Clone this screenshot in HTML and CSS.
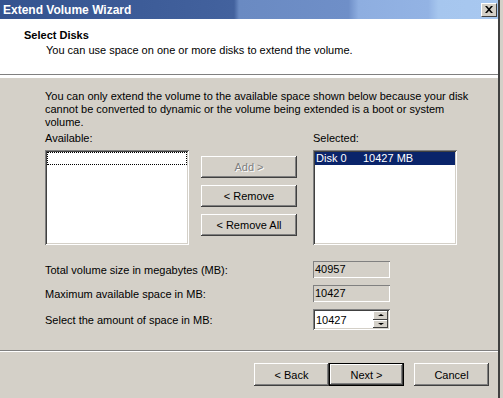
FILE: index.html
```html
<!DOCTYPE html>
<html>
<head>
    <title>Extend Volume Wizard</title>
    <link rel="stylesheet" href="styles.css">
</head>
<body>
    <div class="window">
        <div class="titlebar">
            <span class="title">Extend Volume Wizard</span>
            <div class="close-btn">
                <svg width="8" height="7" viewBox="0 0 8 7">
                    <path d="M0 0h2l2 2.2L6 0h2L5 3.5 8 7H6L4 4.8 2 7H0l3-3.5z" fill="#000"/>
                </svg>
            </div>
        </div>

        <div class="header">
            <h1>Select Disks</h1>
            <p>You can use space on one or more disks to extend the volume.</p>
        </div>

        <div class="content">
            <p class="note">
                You can only extend the volume to the available space shown below because your disk<br>
                cannot be converted to dynamic or the volume being extended is a boot or system<br>
                volume.
            </p>

            <div class="picker">
                <div class="column">
                    <label>Available:</label>
                    <div class="listbox">
                        <div class="item focused"></div>
                    </div>
                </div>
                <div class="moves">
                    <button class="btn" disabled>Add &gt;</button>
                    <button class="btn">&lt; Remove</button>
                    <button class="btn">&lt; Remove All</button>
                </div>
                <div class="column">
                    <label>Selected:</label>
                    <div class="listbox">
                        <div class="item selected">
                            <span class="disk">Disk 0</span>
                            <span>10427 MB</span>
                        </div>
                    </div>
                </div>
            </div>

            <div class="fields">
                <div class="field-row">
                    <span class="field-label">Total volume size in megabytes (MB):</span>
                    <span class="readonly">40957</span>
                </div>
                <div class="field-row">
                    <span class="field-label">Maximum available space in MB:</span>
                    <span class="readonly">10427</span>
                </div>
                <div class="field-row">
                    <span class="field-label">Select the amount of space in MB:</span>
                    <div class="spinbox">
                        <span class="spin-value">10427</span>
                        <div class="spin-buttons">
                            <span class="spin up"></span>
                            <span class="spin down"></span>
                        </div>
                    </div>
                </div>
            </div>
        </div>

        <div class="footer">
            <button class="btn wide">&lt; Back</button>
            <button class="btn wide default">Next &gt;</button>
            <button class="btn wide cancel">Cancel</button>
        </div>
    </div>
</body>
</html>
```

FILE: styles.css
```css
* {
    box-sizing: border-box;
    font-family: "Liberation Sans", Arial, sans-serif;
}
body {
    margin: 0;
    width: 503px;
    height: 398px;
    overflow: hidden;
    background-color: #d4d0c8;
    font-size: 11px;
    color: #000;
}
.window {
    width: 500px;
    height: 398px;
    display: flex;
    flex-direction: column;
    background-color: #d4d0c8;
    border-right: 2px solid #404040;
}

/* title bar */
.titlebar {
    height: 19px;
    flex-shrink: 0;
    display: flex;
    align-items: center;
    padding: 0 1px 0 3px;
    background: linear-gradient(to right, #34538f 0%, #43629e 47%, #6a8ac2 48%, #6f8fc8 70%, #8eaee0 72%, #93b3e4 86%, #a6c6ee 88%, #a8c8f0 100%);
}
.title {
    color: #fff;
    font-weight: bold;
    font-size: 12px;
}
.close-btn {
    position: relative;
    z-index: 2;
    width: 16px;
    height: 14px;
    margin-left: auto;
    flex-shrink: 0;
    display: flex;
    align-items: center;
    justify-content: center;
    background-color: #d4d0c8;
    border-style: solid;
    border-width: 1px;
    border-color: #fff #404040 #404040 #fff;
}

/* header */
.header {
    height: 59px;
    flex-shrink: 0;
    background-color: #fff;
    padding: 10px 0 0 24px;
    border-bottom: 1px solid #fff;
    box-shadow: inset 0 -2px #fff, inset 0 -3px #808080;
}
.header h1 {
    margin: 0;
    font-size: 11px;
    line-height: 13px;
    font-weight: bold;
}
.header p {
    margin: 2px 0 0 22px;
    line-height: 13px;
}

/* content */
.content {
    flex: 1;
    padding: 12px 0 0 45px;
}
.note {
    margin: 0;
    line-height: 13px;
}
.picker {
    display: flex;
    margin-top: 3px;
}
.column {
    display: flex;
    flex-direction: column;
}
.column label {
    line-height: 13px;
    margin-bottom: 5px;
}
.listbox {
    width: 144px;
    height: 95px;
    padding: 2px;
    background-color: #fff;
    box-shadow: inset 1px 1px #808080, inset -1px -1px #fff, inset 2px 2px #404040, inset -2px -2px #d4d0c8;
}
.item {
    height: 13px;
    line-height: 13px;
    padding-left: 1px;
    display: flex;
}
.item.focused {
    border: 1px dotted #000;
}
.item.selected {
    background-color: #0a246a;
    color: #fff;
}
.disk {
    width: 47px;
}
.moves {
    display: flex;
    flex-direction: column;
    gap: 7px;
    margin: 24px 16px 0 12px;
}

/* buttons */
.btn {
    width: 96px;
    height: 22px;
    padding: 0;
    border: none;
    font-size: 11px;
    color: #000;
    background-color: #d4d0c8;
    box-shadow: inset -1px -1px #404040, inset 1px 1px #fff, inset -2px -2px #808080;
}
.btn:disabled {
    color: #808080;
    text-shadow: 1px 1px #fff;
}
.btn.wide {
    width: 75px;
    height: 23px;
}
.btn.default {
    border: 1px solid #000;
}
.btn.cancel {
    margin-left: 10px;
}

/* fields */
.fields {
    display: flex;
    flex-direction: column;
    gap: 7px;
    margin-top: 16px;
}
.field-row {
    display: flex;
    align-items: center;
}
.field-label {
    width: 268px;
}
.readonly {
    width: 77px;
    height: 17px;
    line-height: 16px;
    padding-left: 2px;
    box-shadow: inset 1px 1px #808080, inset -1px -1px #fff;
}
.spinbox {
    width: 77px;
    height: 21px;
    display: flex;
    align-items: center;
    justify-content: space-between;
    padding: 2px;
    background-color: #fff;
    box-shadow: inset 1px 1px #808080, inset -1px -1px #fff, inset 2px 2px #404040, inset -2px -2px #d4d0c8;
}
.spin-value {
    padding-left: 1px;
}
.spin-buttons {
    display: flex;
    flex-direction: column;
    width: 15px;
    height: 17px;
}
.spin {
    flex: 1;
    display: flex;
    align-items: center;
    justify-content: center;
    background-color: #d4d0c8;
    box-shadow: inset -1px -1px #404040, inset 1px 1px #fff;
}
.spin::before {
    content: "";
    border-left: 3px solid transparent;
    border-right: 3px solid transparent;
}
.spin.up::before {
    border-bottom: 2px solid #000;
}
.spin.down::before {
    border-top: 2px solid #000;
}

/* footer */
.footer {
    display: flex;
    flex-shrink: 0;
    padding: 12px 0 12px 254px;
    border-top: 1px solid #808080;
    box-shadow: inset 0 1px #fff;
}
```
